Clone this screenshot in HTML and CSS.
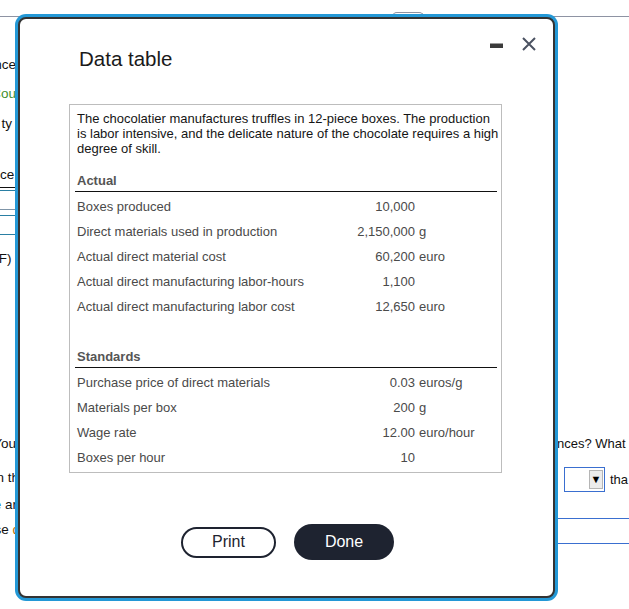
FILE: index.html
```html
<!DOCTYPE html>
<html lang="en">
<head>
<meta charset="utf-8">
<title>Data table</title>
<link rel="stylesheet" href="styles.css">
</head>
<body>
<div class="page">
  <div class="topbar"><div class="tab"></div></div>
  <div class="under">
    <div class="lc">
      <div class="ln l1"><span>ance</span></div>
      <div class="ln l2 green"><span>Cou</span></div>
      <div class="ln l3"><span>ty</span></div>
      <div class="ln l4"><span>ce</span></div>
      <div class="rule teal r1"></div>
      <div class="rule grey r2"></div>
      <div class="rule teal r3"></div>
      <div class="rule teal r4"></div>
      <div class="ln l5"><span>F)</span></div>
      <div class="ln l6"><span>You</span></div>
      <div class="ln l7"><span>in th</span></div>
      <div class="ln l8"><span><span class="blue">e</span> ar</span></div>
      <div class="ln l9"><span>se <span class="brown">d</span></span></div>
    </div>
    <div class="rc">
      <div class="q">nces? What</div>
      <div class="ddrow">
        <div class="dd"><span class="ddbtn">&#9660;</span></div>
        <span class="tha">tha</span>
      </div>
      <div class="rline rl1"></div>
      <div class="rline rl2"></div>
    </div>
  </div>

  <div class="modal">
    <div class="mhead">
      <h1 class="title">Data table</h1>
      <div class="controls">
        <svg class="ic" width="13" height="14" viewBox="0 0 13 14"><rect x="0" y="6.5" width="13" height="4.5" fill="#3b3b3b"/></svg>
        <svg class="ic" width="14" height="14" viewBox="0 0 14 14"><path d="M1 1 L13 13 M13 1 L1 13" stroke="#4b5262" stroke-width="2" fill="none"/></svg>
      </div>
    </div>

    <div class="box">
      <p class="intro">The chocolatier manufactures truffles in 12-piece boxes. The production is labor intensive, and the delicate nature of the chocolate requires a high degree of skill.</p>

      <div class="sec">
        <div class="shead">Actual</div>
        <div class="rows">
          <div class="row"><span class="lbl">Boxes produced</span><span class="num">10,000</span><span class="unit"></span></div>
          <div class="row"><span class="lbl">Direct materials used in production</span><span class="num">2,150,000</span><span class="unit">g</span></div>
          <div class="row"><span class="lbl">Actual direct material cost</span><span class="num">60,200</span><span class="unit">euro</span></div>
          <div class="row"><span class="lbl">Actual direct manufacturing labor-hours</span><span class="num">1,100</span><span class="unit"></span></div>
          <div class="row"><span class="lbl">Actual direct manufacturing labor cost</span><span class="num">12,650</span><span class="unit">euro</span></div>
        </div>
      </div>

      <div class="sec sec2">
        <div class="shead">Standards</div>
        <div class="rows">
          <div class="row"><span class="lbl">Purchase price of direct materials</span><span class="num">0.03</span><span class="unit">euros/g</span></div>
          <div class="row"><span class="lbl">Materials per box</span><span class="num">200</span><span class="unit">g</span></div>
          <div class="row"><span class="lbl">Wage rate</span><span class="num">12.00</span><span class="unit">euro/hour</span></div>
          <div class="row"><span class="lbl">Boxes per hour</span><span class="num">10</span><span class="unit"></span></div>
        </div>
      </div>
    </div>

    <div class="btns">
      <button class="btn print">Print</button>
      <button class="btn done">Done</button>
    </div>
  </div>
</div>
</body>
</html>
```

FILE: styles.css
```css
html, body {
  margin: 0;
  padding: 0;
  background: #fff;
}
body {
  font-family: "Liberation Sans", Arial, sans-serif;
  color: #111;
  width: 629px;
  height: 609px;
  overflow: hidden;
}
.page {
  position: relative;
  width: 629px;
  height: 609px;
}
.topbar {
  height: 16px;
  border-bottom: 1px solid #8e93a3;
  display: flex;
}
.tab {
  margin-left: 392px;
  margin-top: 12px;
  width: 30px;
  height: 4px;
  border: 1px solid #8e93a3;
  border-bottom: none;
  border-radius: 5px 5px 0 0;
}
.under {
  display: flex;
  font-size: 13.5px;
}
.lc {
  width: 17px;
  padding-top: 40px;
}
.ln {
  height: 16px;
  line-height: 16px;
  display: flex;
  justify-content: flex-end;
  white-space: nowrap;
  width: 16px;
}
.l1 { width: 16px; }
.l2 { margin-top: 13px; width: 16px; }
.l3 { margin-top: 14px; width: 12px; }
.l4 { margin-top: 35px; height: 20px; border-bottom: 1px solid #111; width: 17px; }
.l4 span { width: 12px; text-align: right; flex: none; display: block; margin-right: 5px; }
.rule { height: 0; width: 17px; border-top: 1px solid #2a7fa3; }
.rule.grey { border-top-color: #7f95a8; }
.r1 { margin-top: 2px; }
.r2 { margin-top: 18px; }
.r3 { margin-top: 5px; }
.r4 { margin-top: 18px; }
.l5 { margin-top: 16px; width: 11.5px; }
.l6 { margin-top: 169px; width: 16px; }
.l7 { margin-top: 18px; width: 19px; }
.l8 { margin-top: 11px; width: 17px; }
.l9 { margin-top: 9px; width: 20px; }
.green { color: #3f8f2f; }
.blue { color: #1f7fd0; }
.brown { color: #b36b00; }

.rc {
  margin-left: auto;
  width: 72px;
  padding-top: 419px;
}
.q {
  height: 16px;
  line-height: 16px;
  white-space: nowrap;
  font-size: 13px;
}
.ddrow {
  margin-top: 15px;
  display: flex;
  align-items: center;
}
.dd {
  margin-left: 7px;
  width: 41px;
  height: 25px;
  box-sizing: border-box;
  border: 1px solid #3a6fd0;
  display: flex;
  justify-content: flex-end;
  align-items: center;
  padding-right: 1px;
}
.ddbtn {
  width: 14px;
  height: 19px;
  box-sizing: border-box;
  background: #ececec;
  border: 1px solid #b5b5b5;
  font-size: 11px;
  line-height: 17px;
  text-align: center;
  color: #000;
}
.tha {
  margin-left: 5px;
  line-height: 16px;
  font-size: 13px;
}
.rline { height: 0; border-top: 1px solid #3a6fd0; }
.rl1 { margin-top: 26px; }
.rl2 { margin-top: 24px; }

/* modal */
.modal {
  position: absolute;
  left: 18px;
  top: 17px;
  width: 537px;
  height: 581px;
  box-sizing: border-box;
  border: 2px solid #333;
  border-radius: 8px;
  box-shadow: 0 0 0 3px #2398d6;
  background: #fff;
  display: flex;
  flex-direction: column;
}
.mhead {
  display: flex;
  align-items: flex-start;
}
.title {
  margin: 28px 0 0 59px;
  font-size: 20.5px;
  line-height: 24px;
  font-weight: normal;
  color: #1a1a1a;
}
.controls {
  margin: 18px 17px 0 auto;
  display: flex;
  gap: 19px;
}
.ic { display: block; }

.box {
  margin: 33px 0 0 49px;
  width: 433px;
  box-sizing: border-box;
  border: 1px solid #bdbdbd;
  padding: 6px 4px 2px 5px;
  font-size: 13px;
}
.intro {
  margin: 0 -4px 15px 0;
  padding-left: 2px;
  line-height: 15px;
  color: #151515;
}
.shead {
  padding-left: 2px;
  line-height: 20px;
  height: 20px;
  font-weight: bold;
  color: #555;
  border-bottom: 1px solid #111;
}
.rows {
  padding-top: 2px;
}
.sec2 { margin-top: 28px; }
.row {
  display: grid;
  grid-template-columns: 260px 80px 1fr;
  height: 25px;
  line-height: 25px;
  color: #4a4a4a;
  white-space: nowrap;
}
.lbl { padding-left: 2px; }
.num { text-align: right; }
.unit { padding-left: 4px; }

.btns {
  margin-top: 51px;
  padding-left: 161px;
  display: flex;
  align-items: center;
  gap: 18px;
}
.btn {
  font-family: "Liberation Sans", Arial, sans-serif;
  font-size: 16px;
  box-sizing: border-box;
  padding: 0;
  cursor: pointer;
}
.print {
  width: 95px;
  height: 31px;
  border: 2px solid #1e2330;
  border-radius: 16px;
  background: #fff;
  color: #1e2330;
}
.done {
  width: 100px;
  height: 36px;
  border: none;
  border-radius: 18px;
  background: #1e2330;
  color: #fff;
}
```
